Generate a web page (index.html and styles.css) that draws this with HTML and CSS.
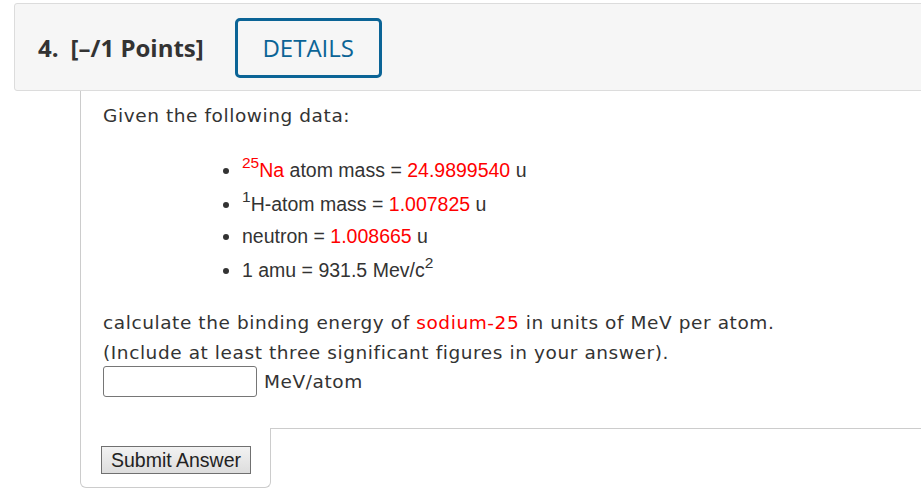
FILE: index.html
```html
<!DOCTYPE html>
<html>
<head>
<meta charset="utf-8">
<link rel="stylesheet" href="styles.css">
</head>
<body>
<div class="page">
  <div class="q-header">
    <span class="q-num">4.</span>
    <span class="q-points">[–/1 Points]</span>
    <button class="details-btn">DETAILS</button>
  </div>
  <div class="q-body">
    <p class="intro">Given the following data:</p>
    <ul class="data-list">
      <li><sup class="red">25</sup><span class="red">Na</span> atom mass = <span class="red">24.9899540</span> u</li>
      <li><sup>1</sup>H-atom mass = <span class="red">1.007825</span> u</li>
      <li>neutron = <span class="red">1.008665</span> u</li>
      <li>1 amu = 931.5 Mev/c<sup>2</sup></li>
    </ul>
    <p class="task">calculate the binding energy of <span class="red">sodium-25</span> in units of MeV per atom.<br>(Include at least three significant figures in your answer).</p>
    <div class="answer-row">
      <input class="answer-input" type="text">
      <span class="unit">MeV/atom</span>
    </div>
  </div>
  <div class="q-footer">
    <div class="submit-cell">
      <button class="submit-btn">Submit Answer</button>
    </div>
    <div class="footer-rest"></div>
  </div>
</div>
</body>
</html>
```

FILE: styles.css
```css
html, body {
  margin: 0;
  padding: 0;
  background: #fff;
  overflow: hidden;
}
.page {
  padding-top: 3px;
  width: 1000px;
  color: #333;
  font-family: "DejaVu Sans", Verdana, sans-serif;
}
.q-header {
  margin-left: 14px;
  height: 86px;
  background: #f6f6f6;
  border: 1px solid #dcdcdc;
  border-radius: 3px 0 0 3px;
  display: flex;
  align-items: center;
  padding-left: 23px;
  box-sizing: content-box;
  font-family: "Open Sans", sans-serif;
}
.q-num, .q-points {
  font-weight: 700;
  font-size: 24px;
  color: #333;
}
.q-num { margin-right: 12px; }
.q-points { margin-right: 31px; }
.details-btn {
  width: 147px;
  height: 60px;
  border: 3px solid #0b6496;
  border-radius: 5px;
  background: transparent;
  color: #0b6496;
  font-family: "Open Sans", sans-serif;
  font-size: 24px;
  padding: 0;
  margin-top: 1px;
}
.q-body {
  margin-left: 80px;
  border-left: 1px solid #cccccc;
  padding: 10px 0 31px 22px;
  font-size: 18.5px;
  letter-spacing: 0.58px;
}
.intro {
  margin: 0;
  line-height: 30px;
}
.data-list {
  margin: 22px 0 0 0;
  padding-left: 139px;
  font-family: "Liberation Sans", Arial, sans-serif;
  font-size: 19.5px;
  line-height: 24px;
  letter-spacing: 0;
}
.data-list li {
  padding: 5px 0;
}
.data-list li:nth-child(3) { padding: 3px 0 5px; }
.data-list sup {
  font-size: 15.5px;
  line-height: 0;
  vertical-align: 9px;
}
.red { color: #ff0000; }
.task {
  margin: 21px 0 0 0;
  line-height: 30px;
}
.answer-row {
  display: flex;
  align-items: center;
  height: 31px;
  margin-top: -2px;
}
.answer-input {
  width: 154px;
  height: 31px;
  box-sizing: border-box;
  border: 1px solid #767676;
  border-radius: 3px;
  margin: 0 7px 0 0;
  padding: 0;
}
.unit { line-height: 30px; }
.q-footer {
  display: flex;
  margin-left: 80px;
}
.submit-cell {
  width: 191px;
  border-left: 1px solid #cccccc;
  border-right: 1px solid #cccccc;
  border-bottom: 1px solid #cccccc;
  border-radius: 0 0 6px 6px;
  padding: 18px 0 13px 20px;
  box-sizing: border-box;
}
.footer-rest {
  flex: 1;
  border-top: 1px solid #cccccc;
}
.submit-btn {
  width: 150px;
  height: 28px;
  border: 1px solid #707070;
  background: linear-gradient(#f2f2f2, #dddddd);
  font-family: "Liberation Sans", Arial, sans-serif;
  font-size: 19.5px;
  color: #222;
  padding: 0;
  border-radius: 0;
  display: block;
}
```
